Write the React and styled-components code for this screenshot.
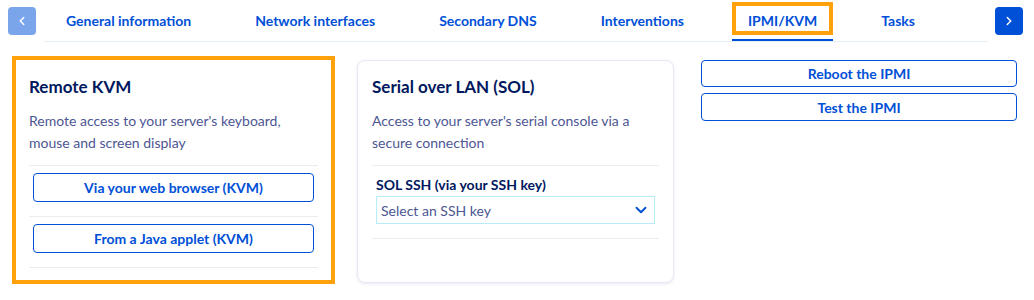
import React from "react";
import styled, { createGlobalStyle } from "styled-components";
import { ChevronLeft, ChevronRight, ChevronDown } from "lucide-react";

const GlobalStyle = createGlobalStyle`
  * { box-sizing: border-box; }
  body {
    margin: 0;
    background: #fff;
    font-family: Lato, "Liberation Sans", sans-serif;
  }
`;

const tabs = [
  "General information",
  "Network interfaces",
  "Secondary DNS",
  "Interventions",
  "IPMI/KVM",
  "Tasks",
];

const App = () => {
  return (
    <>
      <GlobalStyle />
      <Page>
        <TabBar>
          <ArrowButton $disabled>
            <ChevronLeft size={14} strokeWidth={2.5} />
          </ArrowButton>
          <TabList>
            {tabs.map((t) => (
              <Tab key={t} $active={t === "IPMI/KVM"}>
                <TabLabel $highlight={t === "IPMI/KVM"}>{t}</TabLabel>
              </Tab>
            ))}
          </TabList>
          <ArrowButton>
            <ChevronRight size={14} strokeWidth={2.5} />
          </ArrowButton>
        </TabBar>

        <Content>
          <Card $highlight>
            <CardTitle>Remote KVM</CardTitle>
            <Description>
              Remote access to your server's keyboard,
              <br />
              mouse and screen display
            </Description>
            <Divider />
            <ButtonRow>
              <OutlineButton>Via your web browser (KVM)</OutlineButton>
            </ButtonRow>
            <Divider />
            <ButtonRow>
              <OutlineButton>From a Java applet (KVM)</OutlineButton>
            </ButtonRow>
            <Divider />
          </Card>

          <Card>
            <CardTitle>Serial over LAN (SOL)</CardTitle>
            <Description>
              Access to your server's serial console via a
              <br />
              secure connection
            </Description>
            <Divider />
            <Field>
              <FieldLabel>SOL SSH (via your SSH key)</FieldLabel>
              <Select>
                <span>Select an SSH key</span>
                <ChevronDown size={18} strokeWidth={2.5} color="#0050d7" />
              </Select>
            </Field>
            <Divider />
          </Card>

          <Actions>
            <OutlineButton $height={27}>Reboot the IPMI</OutlineButton>
            <OutlineButton $height={28}>Test the IPMI</OutlineButton>
          </Actions>
        </Content>
      </Page>
    </>
  );
};

const Page = styled.div`
  width: 1034px;
  height: 300px;
  overflow: hidden;
`;

const TabBar = styled.div`
  display: flex;
  align-items: flex-start;
  padding: 0 11px 0 8px;
`;

const ArrowButton = styled.button`
  width: 28px;
  height: 28px;
  margin-top: 7px;
  border: none;
  border-radius: 4px;
  padding: 0;
  display: flex;
  align-items: center;
  justify-content: center;
  color: #fff;
  background: ${(p) => (p.$disabled ? "#7ba5eb" : "#0050d7")};
`;

const TabList = styled.div`
  flex: 1;
  display: flex;
  gap: 32px;
  height: 42px;
  margin: 0 7px 0 8px;
  padding-left: 6px;
  border-bottom: 1px solid #e6eef8;
`;

const Tab = styled.div`
  height: 41px;
  padding-top: 2px;
  border-bottom: 2px solid ${(p) => (p.$active ? "#0050d7" : "transparent")};
`;

const TabLabel = styled.div`
  height: 33px;
  display: flex;
  align-items: center;
  padding: 3px ${(p) => (p.$highlight ? "12px" : "16px")} 0;
  border: ${(p) => (p.$highlight ? "4px solid #ffa10a" : "none")};
  color: #0050d7;
  font-size: 14px;
  font-weight: 700;
  white-space: nowrap;
`;

const Content = styled.div`
  display: flex;
  align-items: flex-start;
  padding: 14px 0 0 12px;
`;

const Card = styled.div`
  width: ${(p) => (p.$highlight ? "323px" : "317px")};
  height: ${(p) => (p.$highlight ? "228px" : "223px")};
  margin-top: ${(p) => (p.$highlight ? "0" : "4px")};
  margin-right: ${(p) => (p.$highlight ? "22px" : "27px")};
  padding: ${(p) => (p.$highlight ? "15px 13px 0" : "14px 14px 0")};
  background: #fff;
  border: ${(p) => (p.$highlight ? "4px solid #ffa10a" : "1px solid #e7e7f6")};
  border-radius: ${(p) => (p.$highlight ? "0" : "8px")};
  box-shadow: ${(p) => (p.$highlight ? "none" : "0 1px 3px rgba(80, 80, 180, 0.12)")};
`;

const CardTitle = styled.h3`
  margin: 0;
  color: #00185e;
  font-size: 17px;
  font-weight: 700;
  line-height: 24px;
`;

const Description = styled.p`
  margin: 11px 0 11px;
  color: #4d5693;
  font-size: 14px;
  line-height: 22px;
`;

const Divider = styled.div`
  height: 1px;
  background: #ececef;
`;

const ButtonRow = styled.div`
  padding: 7px 4px 14px;
`;

const OutlineButton = styled.button`
  width: 100%;
  height: ${(p) => p.$height || 29}px;
  border: 1px solid #0050d7;
  border-radius: 4px;
  background: #fff;
  color: #0050d7;
  font-family: inherit;
  font-size: 14px;
  font-weight: 700;
  cursor: pointer;
`;

const Field = styled.div`
  padding: 10px 4px 14px;
`;

const FieldLabel = styled.div`
  color: #00185e;
  font-size: 14px;
  font-weight: 700;
  line-height: 18px;
  margin-bottom: 2px;
`;

const Select = styled.div`
  height: 28px;
  display: flex;
  align-items: center;
  justify-content: space-between;
  padding: 0 4px 0 4px;
  border: 1px solid #b7ecf9;
  color: #4d5693;
  font-size: 14px;
`;

const Actions = styled.div`
  width: 316px;
  display: flex;
  flex-direction: column;
  gap: 6px;
  margin-top: 4px;
`;

export default App;
